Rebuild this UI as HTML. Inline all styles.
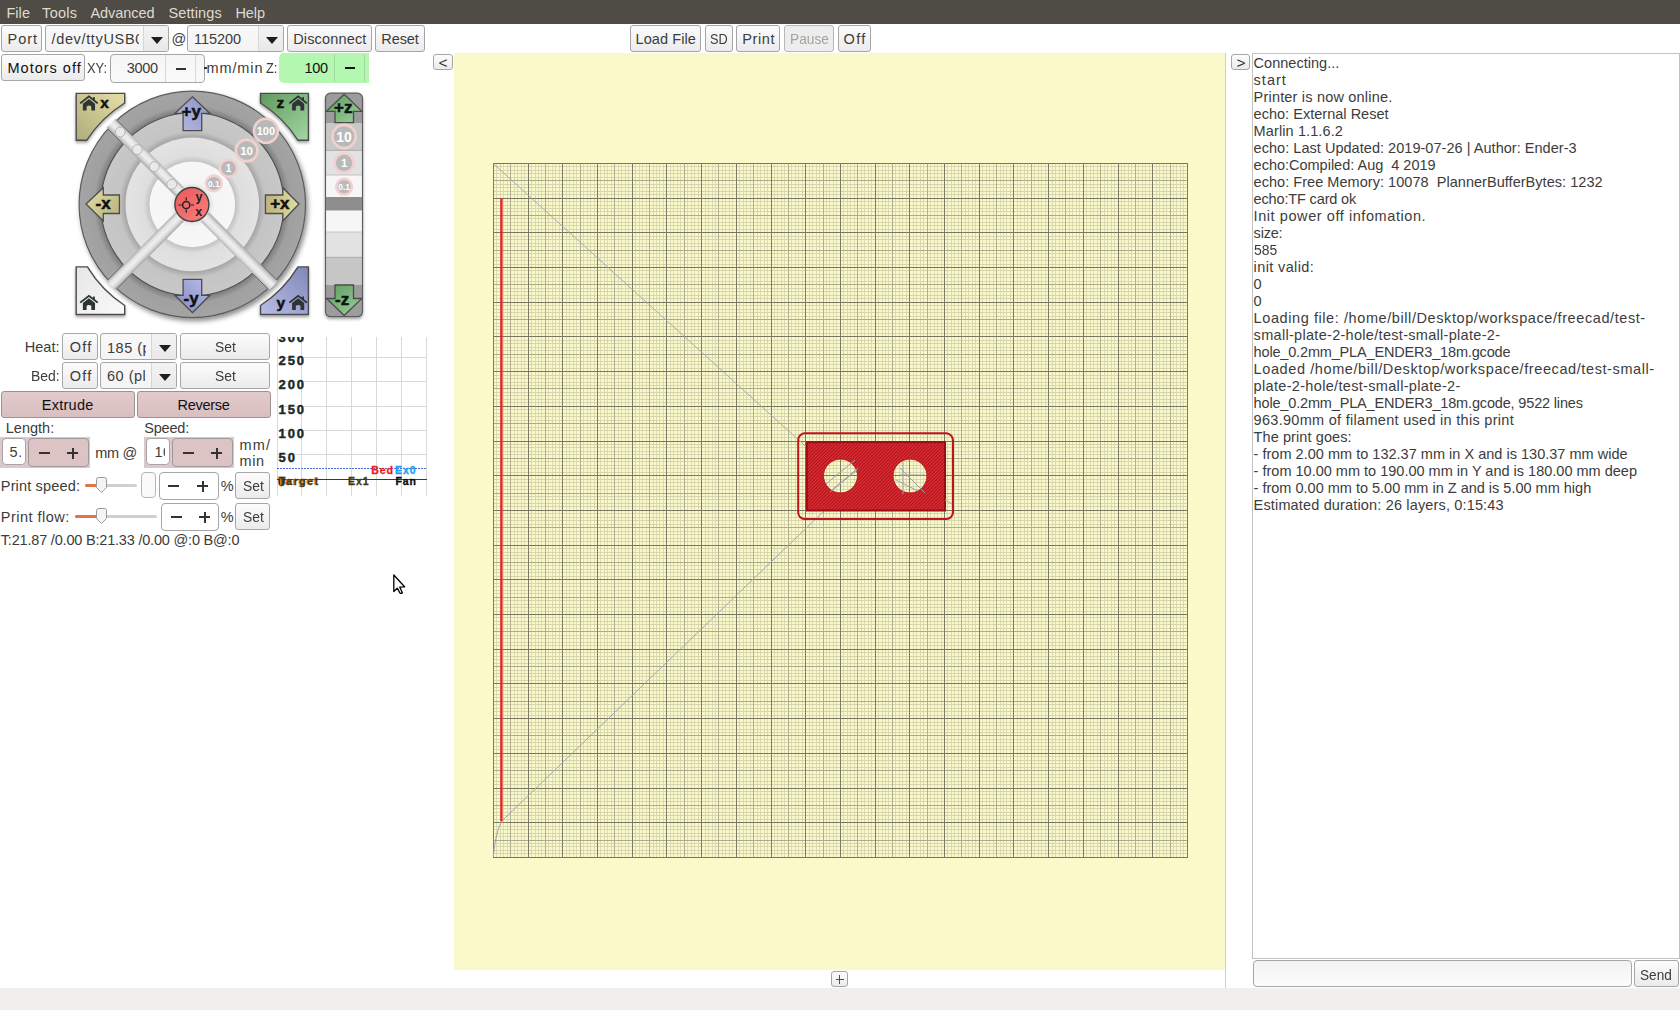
<!DOCTYPE html>
<html><head><meta charset="utf-8">
<style>
*{margin:0;padding:0;box-sizing:border-box}
html,body{width:1680px;height:1010px;overflow:hidden;background:#fff;font-family:"Liberation Sans",sans-serif;color:#3c3c3c;font-size:14.5px}
.a{position:absolute}
.t{position:absolute;white-space:pre}
.btn{position:absolute;border:1px solid #a6a6a6;border-radius:3px;background:linear-gradient(#fcfcfc,#ebebeb)}
.combo{position:absolute;border:1px solid #a6a6a6;border-radius:3px;background:linear-gradient(#f8f8f8,#f4f4f4);overflow:hidden;white-space:pre}
.sep{position:absolute;top:0;bottom:0;border-left:1px solid #d6d6d6;background:linear-gradient(#f3f3f3,#e9e9e9)}
.tri{position:absolute;width:0;height:0;border-left:6px solid transparent;border-right:6px solid transparent;border-top:7px solid #1e1e1e}
.spin{position:absolute;border:1px solid #a6a6a6;border-radius:4px;background:#fff}

</style></head><body>
<div class="a" style="left:0;top:0;width:1680px;height:24px;background:#4f4b45"></div>
<div class="a" style="left:0;top:988px;width:1680px;height:22px;background:#f0efed"></div>

<!-- row 1 -->
<div class="btn" style="left:1px;top:25px;width:41px;height:27px"></div>
<div class="combo" style="left:45px;top:25px;width:124px;height:27px"><div class="a" style="left:0;top:0;width:93px;height:25px;overflow:hidden"><div class="t" style="left:5.5px;top:5.9px;font-size:14.5px;line-height:14.5px;letter-spacing:0.65px">/dev/ttyUSB0</div></div><div class="sep" style="left:97px;width:27px"><div class="tri" style="left:7px;top:11px"></div></div></div>
<div class="combo" style="left:187px;top:25px;width:97px;height:27px"><div class="sep" style="left:70px;width:27px"><div class="tri" style="left:7px;top:11px"></div></div></div>
<div class="btn" style="left:287px;top:25px;width:85px;height:27px"></div>
<div class="btn" style="left:375px;top:25px;width:50px;height:27px"></div>
<div class="btn" style="left:630px;top:25px;width:71px;height:27px"></div>
<div class="btn" style="left:705px;top:25px;width:28px;height:27px"></div>
<div class="btn" style="left:736px;top:25px;width:44px;height:27px"></div>
<div class="btn" style="left:784px;top:25px;width:50px;height:27px;background:#ededed;border-color:#b8b8b8"></div>
<div class="btn" style="left:838px;top:25px;width:33px;height:27px"></div>

<!-- row 2 -->
<div class="btn" style="left:1px;top:54px;width:84px;height:27px"></div>
<div class="a" style="left:110px;top:54px;width:95px;height:29px;border:1px solid #a6a6a6;border-radius:4px;background:linear-gradient(#f5f5f5,#fafafa)">
  <div class="a" style="left:54px;top:0;width:1px;height:27px;background:#d8d8d8"></div>
  <div class="a" style="left:84px;top:0;width:1px;height:27px;background:#d8d8d8"></div>
  <div class="a" style="left:65px;top:13px;width:10px;height:2px;background:#333"></div>
</div>
<div class="a" style="left:204px;top:67px;width:3px;height:2px;background:#333"></div>
<div class="a" style="left:279px;top:53px;width:90px;height:30px;background:#b4f7b1;border-radius:5px 0 0 5px">
  <div class="a" style="left:55px;top:1px;width:1px;height:28px;background:#a0d8a0"></div>
  <div class="a" style="left:85px;top:1px;width:1px;height:28px;background:#a0d8a0"></div>
  <div class="a" style="left:66px;top:14px;width:10px;height:2px;background:#111"></div>
</div>
<div class="btn" style="left:433px;top:54px;width:20px;height:16px"></div>
<div class="t" style="left:438.5px;top:55px;font-size:15.5px;line-height:16px;color:#333">&lt;</div>

<!-- heat / bed -->
<div class="btn" style="left:62px;top:333px;width:36px;height:27px"></div>
<div class="combo" style="left:100px;top:333px;width:77px;height:27px"><div class="a" style="left:0;top:0;width:45px;height:25px;overflow:hidden"><div class="t" style="left:6px;top:6.5px;font-size:14.5px;line-height:14.5px;letter-spacing:0.5px">185 (pla)</div></div><div class="sep" style="left:50px;width:27px;background:linear-gradient(#f3f3f3,#e9e9e9)"><div class="tri" style="left:7px;top:11px"></div></div></div>
<div class="btn" style="left:180px;top:333px;width:90px;height:27px"></div>
<div class="btn" style="left:62px;top:362px;width:36px;height:27px"></div>
<div class="combo" style="left:100px;top:362px;width:77px;height:27px"><div class="a" style="left:0;top:0;width:44px;height:25px;overflow:hidden"><div class="t" style="left:6px;top:6.3px;font-size:14.5px;line-height:14.5px;letter-spacing:0.5px">60 (pla)</div></div><div class="sep" style="left:50px;width:27px"><div class="tri" style="left:7px;top:11px"></div></div></div>
<div class="btn" style="left:180px;top:362px;width:90px;height:27px"></div>
<div class="btn" style="left:1px;top:391px;width:134px;height:27px;background:linear-gradient(#e2c9ca,#d9bfc0);border-color:#9c9090"></div>
<div class="btn" style="left:137px;top:391px;width:134px;height:27px;background:linear-gradient(#e2c9ca,#d9bfc0);border-color:#9c9090"></div>

<!-- length / speed -->
<div class="a" style="left:0;top:437px;width:90px;height:31px;background:#dfc8c9"></div>
<div class="a" style="left:2px;top:438px;width:24px;height:27px;border:1px solid #a6a6a6;border-radius:4px;background:#fff;overflow:hidden"><div class="a" style="left:5px;top:0;width:13px;height:25px;overflow:hidden"><div class="t" style="left:1.5px;top:6.2px;font-size:14.5px;line-height:14.5px;letter-spacing:0.8px">5.0</div></div></div>
<div class="a" style="left:28px;top:438px;width:61px;height:29px;border:1px solid #a09a9a;border-radius:4px;background:#dcc4c5">
  <div class="a" style="left:10px;top:13px;width:11px;height:2px;background:#333"></div>
  <div class="a" style="left:38px;top:13px;width:11px;height:2px;background:#333"></div>
  <div class="a" style="left:42.5px;top:8.5px;width:2px;height:11px;background:#333"></div>
</div>
<div class="a" style="left:144px;top:437px;width:90px;height:31px;background:#dfc8c9"></div>
<div class="a" style="left:146px;top:438px;width:24px;height:27px;border:1px solid #a6a6a6;border-radius:4px;background:#fff;overflow:hidden"><div class="a" style="left:5px;top:0;width:13px;height:25px;overflow:hidden"><div class="t" style="left:2.5px;top:6.2px;font-size:14.5px;line-height:14.5px;letter-spacing:0.5px">100</div></div></div>
<div class="a" style="left:172px;top:438px;width:61px;height:29px;border:1px solid #a09a9a;border-radius:4px;background:#dcc4c5">
  <div class="a" style="left:10px;top:13px;width:11px;height:2px;background:#333"></div>
  <div class="a" style="left:38px;top:13px;width:11px;height:2px;background:#333"></div>
  <div class="a" style="left:42.5px;top:8.5px;width:2px;height:11px;background:#333"></div>
</div>

<!-- print speed -->
<div class="a" style="left:85px;top:484px;width:52px;height:3px;border-radius:2px;background:#d0d0d0"></div>
<div class="a" style="left:85px;top:484px;width:14px;height:3px;border-radius:2px;background:#e0734a"></div>
<svg class="a" style="left:95px;top:477px" width="13" height="17"><path d="M1.5 2.5 Q1.5 0.5 3.5 0.5 L9.5 0.5 Q11.5 0.5 11.5 2.5 L11.5 10.5 L6.5 15.5 L1.5 10.5 Z" fill="#f4f4f4" stroke="#9a9a9a"/></svg>
<div class="a" style="left:141px;top:472px;width:15px;height:26px;border:1px solid #b6b6b6;border-radius:4px;background:#fafafa"></div>
<div class="a" style="left:159px;top:472px;width:60px;height:28px;border:1px solid #a6a6a6;border-radius:4px;background:#fff">
  <div class="a" style="left:8px;top:12px;width:11px;height:2px;background:#333"></div>
  <div class="a" style="left:37px;top:12px;width:11px;height:2px;background:#333"></div>
  <div class="a" style="left:41.5px;top:7.5px;width:2px;height:11px;background:#333"></div>
</div>
<div class="btn" style="left:235px;top:472px;width:35px;height:27px"></div>

<!-- print flow -->
<div class="a" style="left:75px;top:515px;width:82px;height:3px;border-radius:2px;background:#d0d0d0"></div>
<div class="a" style="left:75px;top:515px;width:22px;height:3px;border-radius:2px;background:#e0734a"></div>
<svg class="a" style="left:95px;top:508px" width="13" height="17"><path d="M1.5 2.5 Q1.5 0.5 3.5 0.5 L9.5 0.5 Q11.5 0.5 11.5 2.5 L11.5 10.5 L6.5 15.5 L1.5 10.5 Z" fill="#f4f4f4" stroke="#9a9a9a"/></svg>
<div class="a" style="left:161px;top:503px;width:58px;height:28px;border:1px solid #a6a6a6;border-radius:4px;background:#fff">
  <div class="a" style="left:9px;top:12px;width:11px;height:2px;background:#333"></div>
  <div class="a" style="left:37px;top:12px;width:11px;height:2px;background:#333"></div>
  <div class="a" style="left:41.5px;top:7.5px;width:2px;height:11px;background:#333"></div>
</div>
<div class="btn" style="left:235px;top:503px;width:35px;height:27px"></div>

<!-- log panel -->
<div class="a" style="left:1225px;top:53px;width:1px;height:935px;background:#cfcfcf"></div>
<div class="btn" style="left:1231px;top:54px;width:19px;height:16px"></div>
<div class="t" style="left:1236.5px;top:55px;font-size:15.5px;line-height:16px;color:#333">&gt;</div>
<div class="a" style="left:1252px;top:53px;width:428px;height:906px;border:1px solid #c2c2c2;background:#fff"></div>
<div class="a" style="left:1253px;top:960px;width:379px;height:27px;border:1px solid #a6a6a6;border-radius:4px;background:linear-gradient(#f2f2f2,#fcfcfc)"></div>
<div class="btn" style="left:1634px;top:960px;width:45px;height:27px"></div>

<svg class="a" style="left:60px;top:80px" width="320" height="250" viewBox="60 80 320 250">
<defs>
<filter id="sh" x="-20%" y="-20%" width="140%" height="140%"><feGaussianBlur in="SourceAlpha" stdDeviation="2.5"/><feOffset dx="1.5" dy="3" result="b"/><feComponentTransfer><feFuncA type="linear" slope="0.45"/></feComponentTransfer><feMerge><feMergeNode/><feMergeNode in="SourceGraphic"/></feMerge></filter>
<filter id="sh2" x="-20%" y="-20%" width="140%" height="140%"><feGaussianBlur in="SourceAlpha" stdDeviation="1.8"/><feOffset dx="0" dy="2" result="b"/><feComponentTransfer><feFuncA type="linear" slope="0.35"/></feComponentTransfer><feMerge><feMergeNode/><feMergeNode in="SourceGraphic"/></feMerge></filter>
<linearGradient id="gY" x1="1" y1="0" x2="0" y2="1"><stop offset="0" stop-color="#e4e0a4"/><stop offset="1" stop-color="#b0ab7c"/></linearGradient>
<linearGradient id="gYx" x1="0" y1="0" x2="1" y2="0"><stop offset="0" stop-color="#b8b380"/><stop offset="1" stop-color="#e2dea2"/></linearGradient>
<linearGradient id="gYx2" x1="0" y1="0" x2="1" y2="1"><stop offset="0" stop-color="#e4e0a4"/><stop offset="1" stop-color="#b4af7c"/></linearGradient>
<linearGradient id="gG" x1="0" y1="0" x2="1" y2="1"><stop offset="0" stop-color="#5e9a5e"/><stop offset="1" stop-color="#a4d6a2"/></linearGradient>
<linearGradient id="gGz" x1="0" y1="0" x2="1" y2="1"><stop offset="0" stop-color="#5d9c5f"/><stop offset="1" stop-color="#9dd09d"/></linearGradient>
<linearGradient id="gB" x1="1" y1="0" x2="0" y2="1"><stop offset="0" stop-color="#8088b8"/><stop offset="1" stop-color="#b8bee8"/></linearGradient>
<linearGradient id="gBy" x1="0" y1="1" x2="1" y2="0"><stop offset="0" stop-color="#b4bae6"/><stop offset="1" stop-color="#8c93c4"/></linearGradient>
<linearGradient id="gW" x1="0" y1="0" x2="1" y2="1"><stop offset="0" stop-color="#e6e6e6"/><stop offset="1" stop-color="#fafafa"/></linearGradient>
<linearGradient id="gR" x1="0" y1="0" x2="1" y2="1"><stop offset="0" stop-color="#ec5858"/><stop offset="1" stop-color="#f88080"/></linearGradient>
<linearGradient id="bar" x1="0" y1="0" x2="0" y2="1"><stop offset="0" stop-color="#a9a9a9"/><stop offset="0.28" stop-color="#dcdcdc"/><stop offset="0.5" stop-color="#efefef"/><stop offset="0.75" stop-color="#e4e4e4"/><stop offset="1" stop-color="#b2b2b2"/></linearGradient>
<radialGradient id="ring1" cx="0.5" cy="0.5" r="0.5"><stop offset="0.809" stop-color="#7c7c7c"/><stop offset="0.87" stop-color="#a0a0a0"/><stop offset="1" stop-color="#a4a4a4"/></radialGradient>
<radialGradient id="ring2" cx="0.5" cy="0.5" r="0.5"><stop offset="0.729" stop-color="#a4a4a4"/><stop offset="0.8" stop-color="#c4c4c4"/><stop offset="1" stop-color="#c8c8c8"/></radialGradient>
<radialGradient id="ring3" cx="0.5" cy="0.5" r="0.5"><stop offset="0.641" stop-color="#c2c2c2"/><stop offset="0.73" stop-color="#dedede"/><stop offset="1" stop-color="#e3e3e3"/></radialGradient>
<radialGradient id="ring4" cx="0.5" cy="0.5" r="0.5"><stop offset="0.4" stop-color="#e2e2e2"/><stop offset="0.52" stop-color="#f5f5f5"/><stop offset="1" stop-color="#f7f7f7"/></radialGradient>
<linearGradient id="gBy2" x1="1" y1="0" x2="0" y2="1"><stop offset="0" stop-color="#b8bee9"/><stop offset="1" stop-color="#8088c0"/></linearGradient>
</defs>
<g filter="url(#sh)">
<circle cx="192.3" cy="204.4" r="113.2" fill="url(#ring1)" stroke="#5c5c5c" stroke-width="1.2"/>
</g>
<circle cx="192.3" cy="204.4" r="91.6" fill="url(#ring2)" stroke="#505050" stroke-width="1.1"/>
<circle cx="192.3" cy="204.4" r="66.8" fill="url(#ring3)"/>
<circle cx="192.3" cy="204.4" r="42.8" fill="url(#ring4)"/>
<g transform="translate(192.3 204.4) rotate(45)"><rect x="17.4" y="-6.2" width="97.60000000000001" height="12.4" fill="url(#bar)"/></g>
<g transform="translate(192.3 204.4) rotate(135)"><rect x="17.4" y="-6.2" width="97.60000000000001" height="12.4" fill="url(#bar)"/></g>
<g transform="translate(192.3 204.4) rotate(225)"><rect x="17.4" y="-6.2" width="97.60000000000001" height="12.4" fill="url(#bar)"/></g>
<line x1="261.4" y1="264.6" x2="276.7" y2="279.9" stroke="#6a6a6a" stroke-width="1"/>
<line x1="252.5" y1="273.5" x2="267.8" y2="288.8" stroke="#6a6a6a" stroke-width="1"/>
<line x1="132.1" y1="273.5" x2="116.8" y2="288.8" stroke="#6a6a6a" stroke-width="1"/>
<line x1="123.2" y1="264.6" x2="107.9" y2="279.9" stroke="#6a6a6a" stroke-width="1"/>
<line x1="123.2" y1="144.2" x2="107.9" y2="128.9" stroke="#6a6a6a" stroke-width="1"/>
<line x1="132.1" y1="135.3" x2="116.8" y2="120.0" stroke="#6a6a6a" stroke-width="1"/>
<circle cx="120.2" cy="132.0" r="4.9" fill="#e9e9e9" stroke="#b4b4b4" stroke-width="1"/>
<circle cx="137.3" cy="149.6" r="4.9" fill="#e9e9e9" stroke="#b4b4b4" stroke-width="1"/>
<circle cx="154.3" cy="166.6" r="4.9" fill="#e9e9e9" stroke="#b4b4b4" stroke-width="1"/>
<circle cx="171.8" cy="184.3" r="4.9" fill="#e9e9e9" stroke="#b4b4b4" stroke-width="1"/>
<path d="M76.2 93.4 H124.7 V103 A122 122 0 0 0 86.7 140.3 H76.2 Z" fill="url(#gY)" stroke="#4c4c4c" stroke-width="1.4" filter="url(#sh2)"/>
<path d="M260.5 93.4 H308.4 V140.3 H298 A122 122 0 0 0 260.5 103 Z" fill="url(#gG)" stroke="#4c4c4c" stroke-width="1.4" filter="url(#sh2)"/>
<path d="M76.2 266.9 H87.4 A122 122 0 0 0 124.7 305.5 V314.5 H76.2 Z" fill="url(#gW)" stroke="#4c4c4c" stroke-width="1.4" filter="url(#sh2)"/>
<path d="M308.4 266.9 V314.5 H260.5 V305.5 A122 122 0 0 0 298 266.9 Z" fill="url(#gB)" stroke="#4c4c4c" stroke-width="1.4" filter="url(#sh2)"/>
<path d="M192.4 96.8 L209.8 113.4 H201.70000000000002 V130.7 H183.1 V113.4 H175.0 Z" fill="url(#gBy)" stroke="#4c4c4c" stroke-width="1.3"/>
<path d="M192.4 312.7 L209.8 295.3 H201.70000000000002 V279.3 H183.1 V295.3 H175.0 Z" fill="url(#gBy2)" stroke="#4c4c4c" stroke-width="1.3"/>
<path d="M86 204 L103.3 187.7 V195 H119.4 V213.5 H103.3 V221 Z" fill="url(#gYx2)" stroke="#4c4c4c" stroke-width="1.3"/>
<path d="M298.9 204 L282.8 187.7 V195 H265.4 V213.5 H282.8 V221 Z" fill="url(#gYx)" stroke="#4c4c4c" stroke-width="1.3"/>
<circle cx="191.9" cy="204.5" r="17" fill="url(#gR)" stroke="#404040" stroke-width="1.4"/>
<circle cx="186.2" cy="205" r="3.6" fill="none" stroke="#222" stroke-width="1.5"/>
<path d="M186.2 197.2 V200.6 M186.2 209.4 V212.8 M178.4 205 H181.8 M190.6 205 H194" stroke="#222" stroke-width="1.2"/>
<text x="195.5" y="200.5" font-family="Liberation Sans" font-weight="700" font-size="12.5" fill="#222">y</text>
<text x="195.3" y="215.5" font-family="Liberation Sans" font-weight="700" font-size="12.5" fill="#222">x</text>
<circle cx="213.8" cy="183.4" r="7.8" fill="#b9b9b9" stroke="#f2d0d0" stroke-width="2.6"/><text x="213.8" y="186.5" text-anchor="middle" font-family="Liberation Sans" font-weight="700" font-size="8.5" fill="#fff">0.1</text>
<circle cx="228.5" cy="168.3" r="8.6" fill="#b9b9b9" stroke="#f2d0d0" stroke-width="2.6"/><text x="228.5" y="171.9" text-anchor="middle" font-family="Liberation Sans" font-weight="700" font-size="10" fill="#fff">1</text>
<circle cx="246.6" cy="150.6" r="10.8" fill="#b9b9b9" stroke="#f2d0d0" stroke-width="2.6"/><text x="246.6" y="154.7" text-anchor="middle" font-family="Liberation Sans" font-weight="700" font-size="11.5" fill="#fff">10</text>
<circle cx="265.9" cy="130.8" r="12.0" fill="#b9b9b9" stroke="#f2d0d0" stroke-width="2.6"/><text x="265.9" y="134.8" text-anchor="middle" font-family="Liberation Sans" font-weight="700" font-size="11" fill="#fff">100</text>
<g filter="url(#sh2)"><rect x="325.5" y="93.2" width="37" height="223.5" rx="5" fill="#9c9c9c" stroke="#5c5c5c" stroke-width="1.2"/></g>
<rect x="326.1" y="123" width="35.8" height="27.4" fill="#c8c8c8"/>
<rect x="326.1" y="150.4" width="35.8" height="24.6" fill="#e2e2e2"/>
<rect x="326.1" y="175" width="35.8" height="22.0" fill="#f6f6f6"/>
<rect x="326.1" y="197" width="35.8" height="13.5" fill="#8e8e8e"/>
<rect x="326.1" y="210.5" width="35.8" height="21.5" fill="#f6f6f6"/>
<rect x="326.1" y="232" width="35.8" height="25.3" fill="#e2e2e2"/>
<rect x="326.1" y="257.3" width="35.8" height="27.7" fill="#c6c6c6"/>
<line x1="326" y1="150.4" x2="362" y2="150.4" stroke="#aaa" stroke-width="0.8"/>
<line x1="326" y1="175" x2="362" y2="175" stroke="#bbb" stroke-width="0.8"/>
<line x1="326" y1="232" x2="362" y2="232" stroke="#bbb" stroke-width="0.8"/>
<line x1="326" y1="257.3" x2="362" y2="257.3" stroke="#aaa" stroke-width="0.8"/>
<path d="M344.2 94.2 L361.8 111.4 H353.5 V122.6 H335 V111.4 H326.4 Z" fill="url(#gGz)" stroke="#4c4c4c" stroke-width="1.3"/>
<path d="M344.2 315.5 L361.8 298.5 H353.5 V285 H335 V298.5 H326.4 Z" fill="url(#gGz)" stroke="#4c4c4c" stroke-width="1.3"/>
<circle cx="344.1" cy="136.5" r="11.6" fill="#b9b9b9" stroke="#f2d0d0" stroke-width="2.6"/><text x="344.1" y="141.5" text-anchor="middle" font-family="Liberation Sans" font-weight="700" font-size="14" fill="#fff">10</text>
<circle cx="344.1" cy="162.9" r="9.4" fill="#b9b9b9" stroke="#f2d0d0" stroke-width="2.6"/><text x="344.1" y="167.0" text-anchor="middle" font-family="Liberation Sans" font-weight="700" font-size="11.5" fill="#fff">1</text>
<circle cx="344.1" cy="186.7" r="7.8" fill="#b9b9b9" stroke="#f2d0d0" stroke-width="2.6"/><text x="344.1" y="189.8" text-anchor="middle" font-family="Liberation Sans" font-weight="700" font-size="8.5" fill="#fff">0.1</text>
<text x="181.5" y="117.3" font-family="Liberation Sans" font-weight="700" font-size="17" fill="#111" stroke="#111" stroke-width="0.5">+y</text>
<text x="183.5" y="303.6" font-family="Liberation Sans" font-weight="700" font-size="17" fill="#111" stroke="#111" stroke-width="0.5">-y</text>
<text x="95.6" y="209.2" font-family="Liberation Sans" font-weight="700" font-size="17" fill="#111" stroke="#111" stroke-width="0.5">-x</text>
<text x="270.2" y="209.2" font-family="Liberation Sans" font-weight="700" font-size="17" fill="#111" stroke="#111" stroke-width="0.5">+x</text>
<text x="334.0" y="113.3" font-family="Liberation Sans" font-weight="700" font-size="17" fill="#111" stroke="#111" stroke-width="0.5">+z</text>
<text x="335.0" y="305.2" font-family="Liberation Sans" font-weight="700" font-size="17" fill="#111" stroke="#111" stroke-width="0.5">-z</text>
<g transform="translate(79.6 95.6) scale(1.17 1.03)"><path d="M0.5 7.5 L8 0.8 L15.5 7.5" fill="none" stroke="#2e3336" stroke-width="1.6"/><path d="M12.2 1.5 V5" stroke="#2e3336" stroke-width="1.6"/><path d="M2.8 7.8 L8 3.2 L13.2 7.8 V14.5 H10 V10.5 Q8 8.8 6 10.5 V14.5 H2.8 Z" fill="#2e3336"/></g>
<text x="100.3" y="107.6" font-family="Liberation Sans" font-weight="700" font-size="15.5" fill="#111" stroke="#111" stroke-width="0.5">x</text>
<text x="276.6" y="107.6" font-family="Liberation Sans" font-weight="700" font-size="15.5" fill="#111" stroke="#111" stroke-width="0.5">z</text>
<g transform="translate(288.8 95.6) scale(1.17 1.03)"><path d="M0.5 7.5 L8 0.8 L15.5 7.5" fill="none" stroke="#2e3336" stroke-width="1.6"/><path d="M12.2 1.5 V5" stroke="#2e3336" stroke-width="1.6"/><path d="M2.8 7.8 L8 3.2 L13.2 7.8 V14.5 H10 V10.5 Q8 8.8 6 10.5 V14.5 H2.8 Z" fill="#2e3336"/></g>
<g transform="translate(79.6 295.0) scale(1.17 1.03)"><path d="M0.5 7.5 L8 0.8 L15.5 7.5" fill="none" stroke="#2e3336" stroke-width="1.6"/><path d="M12.2 1.5 V5" stroke="#2e3336" stroke-width="1.6"/><path d="M2.8 7.8 L8 3.2 L13.2 7.8 V14.5 H10 V10.5 Q8 8.8 6 10.5 V14.5 H2.8 Z" fill="#2e3336"/></g>
<text x="276.4" y="307.5" font-family="Liberation Sans" font-weight="700" font-size="15.5" fill="#111" stroke="#111" stroke-width="0.5">y</text>
<g transform="translate(288.8 295.0) scale(1.17 1.03)"><path d="M0.5 7.5 L8 0.8 L15.5 7.5" fill="none" stroke="#2e3336" stroke-width="1.6"/><path d="M12.2 1.5 V5" stroke="#2e3336" stroke-width="1.6"/><path d="M2.8 7.8 L8 3.2 L13.2 7.8 V14.5 H10 V10.5 Q8 8.8 6 10.5 V14.5 H2.8 Z" fill="#2e3336"/></g>
</svg>
<svg class="a" style="left:272px;top:334px" width="160" height="165" viewBox="272 334 160 165">
<line x1="277.5" y1="337" x2="277.5" y2="496" stroke="#d9d9d9" stroke-width="1"/>
<line x1="301.5" y1="337" x2="301.5" y2="496" stroke="#d9d9d9" stroke-width="1"/>
<line x1="326.5" y1="337" x2="326.5" y2="496" stroke="#d9d9d9" stroke-width="1"/>
<line x1="351.5" y1="337" x2="351.5" y2="496" stroke="#d9d9d9" stroke-width="1"/>
<line x1="376.5" y1="337" x2="376.5" y2="496" stroke="#d9d9d9" stroke-width="1"/>
<line x1="401.5" y1="337" x2="401.5" y2="496" stroke="#d9d9d9" stroke-width="1"/>
<line x1="426.5" y1="337" x2="426.5" y2="496" stroke="#d9d9d9" stroke-width="1"/>
<line x1="277" y1="357.5" x2="427" y2="357.5" stroke="#d9d9d9" stroke-width="1"/>
<line x1="277" y1="381.5" x2="427" y2="381.5" stroke="#d9d9d9" stroke-width="1"/>
<line x1="277" y1="406.5" x2="427" y2="406.5" stroke="#d9d9d9" stroke-width="1"/>
<line x1="277" y1="430.5" x2="427" y2="430.5" stroke="#d9d9d9" stroke-width="1"/>
<line x1="277" y1="454.5" x2="427" y2="454.5" stroke="#d9d9d9" stroke-width="1"/>
<line x1="277" y1="479.5" x2="427" y2="479.5" stroke="#3a3a30" stroke-width="1.2"/>
<line x1="277" y1="468.5" x2="427" y2="468.5" stroke="#4a6ad8" stroke-width="1" stroke-dasharray="2 1"/>
<clipPath id="gclip"><rect x="272" y="337" width="160" height="165"/></clipPath>
<g clip-path="url(#gclip)">
<text x="278.5" y="341.5" font-family="Liberation Sans" font-weight="700" font-size="13" fill="#1a2a2a" stroke="#1a2a2a" stroke-width="0.45" letter-spacing="1.9">300</text>
</g>
<text x="278.5" y="365.2" font-family="Liberation Sans" font-weight="700" font-size="13" fill="#1a2a2a" stroke="#1a2a2a" stroke-width="0.45" letter-spacing="1.9">250</text>
<text x="278.5" y="389.2" font-family="Liberation Sans" font-weight="700" font-size="13" fill="#1a2a2a" stroke="#1a2a2a" stroke-width="0.45" letter-spacing="1.9">200</text>
<text x="278.5" y="413.9" font-family="Liberation Sans" font-weight="700" font-size="13" fill="#1a2a2a" stroke="#1a2a2a" stroke-width="0.45" letter-spacing="1.9">150</text>
<text x="278.5" y="438.0" font-family="Liberation Sans" font-weight="700" font-size="13" fill="#1a2a2a" stroke="#1a2a2a" stroke-width="0.45" letter-spacing="1.9">100</text>
<text x="278.5" y="461.9" font-family="Liberation Sans" font-weight="700" font-size="13" fill="#1a2a2a" stroke="#1a2a2a" stroke-width="0.45" letter-spacing="1.9">50</text>
<text x="278.0" y="485.5" font-family="Liberation Sans" font-weight="700" font-size="13" fill="#1a2a2a" stroke="#1a2a2a" stroke-width="0.45" letter-spacing="1.9">0</text>
<text x="371.2" y="473.8" font-family="Liberation Sans" font-weight="700" font-size="10.5" fill="#f01818" stroke="#f01818" stroke-width="0.3" letter-spacing="0.9">Bed</text>
<text x="395.0" y="473.8" font-family="Liberation Sans" font-weight="700" font-size="10.5" fill="#1a9cf2" stroke="#1a9cf2" stroke-width="0.3" letter-spacing="0.9">Ex0</text>
<text x="277.8" y="485.3" font-family="Liberation Sans" font-weight="700" font-size="10.5" fill="#f08020" stroke="#f08020" stroke-width="0.3" letter-spacing="1.6">Target</text>
<text x="279.0" y="485.3" font-family="Liberation Sans" font-weight="700" font-size="10.5" fill="#3a3a18" stroke="#3a3a18" stroke-width="0.3" letter-spacing="1.6">Target</text>
<text x="348.0" y="485.3" font-family="Liberation Sans" font-weight="700" font-size="10.5" fill="#3a3a10" stroke="#3a3a10" stroke-width="0.3" letter-spacing="0.9">Ex1</text>
<text x="395.5" y="485.3" font-family="Liberation Sans" font-weight="700" font-size="10.5" fill="#0a0a0a" stroke="#0a0a0a" stroke-width="0.3" letter-spacing="0.9">Fan</text>
</svg>
<svg class="a" style="left:388px;top:570px" width="24" height="28" viewBox="388 570 24 28"><path d="M393.8 575 V591.5 L397.3 588.2 L399.9 592.9 Q401.1 593.9 402.4 592.7 L399.8 587.2 L404.6 586.8 Z" fill="#fbfbfb" stroke="#000" stroke-width="1.3" stroke-linejoin="round"/></svg>
<div class="a" style="left:454px;top:53px;width:771px;height:917px;background:#faf9c9"></div>
<svg class="a" style="left:454px;top:53px" width="771" height="917" viewBox="454 53 771 917">
<path d="M496.5 163V858M500.5 163V858M503.5 163V858M507.5 163V858M514.5 163V858M517.5 163V858M521.5 163V858M524.5 163V858M531.5 163V858M535.5 163V858M538.5 163V858M541.5 163V858M548.5 163V858M552.5 163V858M555.5 163V858M559.5 163V858M566.5 163V858M569.5 163V858M573.5 163V858M576.5 163V858M583.5 163V858M587.5 163V858M590.5 163V858M594.5 163V858M600.5 163V858M604.5 163V858M607.5 163V858M611.5 163V858M618.5 163V858M621.5 163V858M625.5 163V858M628.5 163V858M635.5 163V858M639.5 163V858M642.5 163V858M646.5 163V858M653.5 163V858M656.5 163V858M659.5 163V858M663.5 163V858M670.5 163V858M673.5 163V858M677.5 163V858M680.5 163V858M687.5 163V858M691.5 163V858M694.5 163V858M698.5 163V858M705.5 163V858M708.5 163V858M712.5 163V858M715.5 163V858M722.5 163V858M725.5 163V858M729.5 163V858M732.5 163V858M739.5 163V858M743.5 163V858M746.5 163V858M750.5 163V858M757.5 163V858M760.5 163V858M764.5 163V858M767.5 163V858M774.5 163V858M777.5 163V858M781.5 163V858M784.5 163V858M791.5 163V858M795.5 163V858M798.5 163V858M802.5 163V858M809.5 163V858M812.5 163V858M816.5 163V858M819.5 163V858M826.5 163V858M829.5 163V858M833.5 163V858M836.5 163V858M843.5 163V858M847.5 163V858M850.5 163V858M854.5 163V858M861.5 163V858M864.5 163V858M868.5 163V858M871.5 163V858M878.5 163V858M882.5 163V858M885.5 163V858M888.5 163V858M895.5 163V858M899.5 163V858M902.5 163V858M906.5 163V858M913.5 163V858M916.5 163V858M920.5 163V858M923.5 163V858M930.5 163V858M934.5 163V858M937.5 163V858M941.5 163V858M947.5 163V858M951.5 163V858M954.5 163V858M958.5 163V858M965.5 163V858M968.5 163V858M972.5 163V858M975.5 163V858M982.5 163V858M986.5 163V858M989.5 163V858M993.5 163V858M1000.5 163V858M1003.5 163V858M1006.5 163V858M1010.5 163V858M1017.5 163V858M1020.5 163V858M1024.5 163V858M1027.5 163V858M1034.5 163V858M1038.5 163V858M1041.5 163V858M1045.5 163V858M1052.5 163V858M1055.5 163V858M1059.5 163V858M1062.5 163V858M1069.5 163V858M1072.5 163V858M1076.5 163V858M1079.5 163V858M1086.5 163V858M1090.5 163V858M1093.5 163V858M1097.5 163V858M1104.5 163V858M1107.5 163V858M1111.5 163V858M1114.5 163V858M1121.5 163V858M1124.5 163V858M1128.5 163V858M1131.5 163V858M1138.5 163V858M1142.5 163V858M1145.5 163V858M1149.5 163V858M1156.5 163V858M1159.5 163V858M1163.5 163V858M1166.5 163V858M1173.5 163V858M1176.5 163V858M1180.5 163V858M1183.5 163V858" stroke="#dcdab3" stroke-width="1" fill="none"/>
<path d="M493 166.5H1188M493 170.5H1188M493 173.5H1188M493 177.5H1188M493 184.5H1188M493 187.5H1188M493 191.5H1188M493 194.5H1188M493 201.5H1188M493 205.5H1188M493 208.5H1188M493 211.5H1188M493 218.5H1188M493 222.5H1188M493 225.5H1188M493 229.5H1188M493 236.5H1188M493 239.5H1188M493 243.5H1188M493 246.5H1188M493 253.5H1188M493 257.5H1188M493 260.5H1188M493 264.5H1188M493 270.5H1188M493 274.5H1188M493 277.5H1188M493 281.5H1188M493 288.5H1188M493 291.5H1188M493 295.5H1188M493 298.5H1188M493 305.5H1188M493 309.5H1188M493 312.5H1188M493 316.5H1188M493 323.5H1188M493 326.5H1188M493 329.5H1188M493 333.5H1188M493 340.5H1188M493 343.5H1188M493 347.5H1188M493 350.5H1188M493 357.5H1188M493 361.5H1188M493 364.5H1188M493 368.5H1188M493 375.5H1188M493 378.5H1188M493 382.5H1188M493 385.5H1188M493 392.5H1188M493 395.5H1188M493 399.5H1188M493 402.5H1188M493 409.5H1188M493 413.5H1188M493 416.5H1188M493 420.5H1188M493 427.5H1188M493 430.5H1188M493 434.5H1188M493 437.5H1188M493 444.5H1188M493 447.5H1188M493 451.5H1188M493 454.5H1188M493 461.5H1188M493 465.5H1188M493 468.5H1188M493 472.5H1188M493 479.5H1188M493 482.5H1188M493 486.5H1188M493 489.5H1188M493 496.5H1188M493 499.5H1188M493 503.5H1188M493 506.5H1188M493 513.5H1188M493 517.5H1188M493 520.5H1188M493 524.5H1188M493 531.5H1188M493 534.5H1188M493 538.5H1188M493 541.5H1188M493 548.5H1188M493 552.5H1188M493 555.5H1188M493 558.5H1188M493 565.5H1188M493 569.5H1188M493 572.5H1188M493 576.5H1188M493 583.5H1188M493 586.5H1188M493 590.5H1188M493 593.5H1188M493 600.5H1188M493 604.5H1188M493 607.5H1188M493 611.5H1188M493 617.5H1188M493 621.5H1188M493 624.5H1188M493 628.5H1188M493 635.5H1188M493 638.5H1188M493 642.5H1188M493 645.5H1188M493 652.5H1188M493 656.5H1188M493 659.5H1188M493 663.5H1188M493 670.5H1188M493 673.5H1188M493 676.5H1188M493 680.5H1188M493 687.5H1188M493 690.5H1188M493 694.5H1188M493 697.5H1188M493 704.5H1188M493 708.5H1188M493 711.5H1188M493 715.5H1188M493 722.5H1188M493 725.5H1188M493 729.5H1188M493 732.5H1188M493 739.5H1188M493 742.5H1188M493 746.5H1188M493 749.5H1188M493 756.5H1188M493 760.5H1188M493 763.5H1188M493 767.5H1188M493 774.5H1188M493 777.5H1188M493 781.5H1188M493 784.5H1188M493 791.5H1188M493 794.5H1188M493 798.5H1188M493 801.5H1188M493 808.5H1188M493 812.5H1188M493 815.5H1188M493 819.5H1188M493 826.5H1188M493 829.5H1188M493 833.5H1188M493 836.5H1188M493 843.5H1188M493 846.5H1188M493 850.5H1188M493 853.5H1188" stroke="#d7d5ad" stroke-width="1" fill="none"/>
<path d="M510.5 163V858M545.5 163V858M580.5 163V858M614.5 163V858M649.5 163V858M684.5 163V858M718.5 163V858M753.5 163V858M788.5 163V858M823.5 163V858M857.5 163V858M892.5 163V858M927.5 163V858M961.5 163V858M996.5 163V858M1031.5 163V858M1065.5 163V858M1100.5 163V858M1135.5 163V858M1170.5 163V858" stroke="#afae91" stroke-width="1" fill="none"/>
<path d="M493 180.5H1188M493 215.5H1188M493 250.5H1188M493 284.5H1188M493 319.5H1188M493 354.5H1188M493 388.5H1188M493 423.5H1188M493 458.5H1188M493 493.5H1188M493 527.5H1188M493 562.5H1188M493 597.5H1188M493 631.5H1188M493 666.5H1188M493 701.5H1188M493 735.5H1188M493 770.5H1188M493 805.5H1188M493 840.5H1188" stroke="#abaa8d" stroke-width="1" fill="none"/>
<path d="M493.5 163V858M528.5 163V858M562.5 163V858M597.5 163V858M632.5 163V858M666.5 163V858M701.5 163V858M736.5 163V858M771.5 163V858M805.5 163V858M840.5 163V858M875.5 163V858M909.5 163V858M944.5 163V858M979.5 163V858M1013.5 163V858M1048.5 163V858M1083.5 163V858M1118.5 163V858M1152.5 163V858M1187.5 163V858" stroke="#7b7b66" stroke-width="1" fill="none"/>
<path d="M493 163.5H1188M493 198.5H1188M493 232.5H1188M493 267.5H1188M493 302.5H1188M493 336.5H1188M493 371.5H1188M493 406.5H1188M493 441.5H1188M493 475.5H1188M493 510.5H1188M493 545.5H1188M493 579.5H1188M493 614.5H1188M493 649.5H1188M493 683.5H1188M493 718.5H1188M493 753.5H1188M493 788.5H1188M493 822.5H1188M493 857.5H1188" stroke="#777762" stroke-width="1" fill="none"/>
<path d="M493 163.3 L808 448.5" stroke="#a6a6b0" stroke-width="0.9" fill="none"/>
<path d="M501.3 821.5 L825 510" stroke="#a8a8b2" stroke-width="1" fill="none"/>
<path d="M501.3 821.5 Q495 835 493.3 857" stroke="#a3a4ac" stroke-width="1" fill="none"/>
<rect x="500.2" y="198.3" width="2.4" height="623" fill="#e8262a"/>
<path d="M804.5 433.3 H946.5 Q949 433.3 951 435.5 L951.5 436 Q953 438 953 440.5 V512.5 Q953 515 951 517 Q949 519 946.5 519 H804.5 Q802 519 800 517 Q798.2 515 798.2 512.5 V440 Q798.2 437.5 800 435.5 Q802 433.3 804.5 433.3 Z" stroke="#c0141c" stroke-width="2" fill="none"/>
<defs><pattern id="hatch" width="2.4" height="2.4" patternUnits="userSpaceOnUse" patternTransform="rotate(45)"><rect width="2.4" height="2.4" fill="#e42d35"/><rect width="1.1" height="2.4" fill="#a8141c"/></pattern><mask id="holes"><rect x="790" y="420" width="180" height="110" fill="#fff"/><circle cx="840.5" cy="476" r="16.8" fill="#000"/><circle cx="910" cy="476" r="16.8" fill="#000"/></mask></defs>
<rect x="806.8" y="442.1" width="138.2" height="68.4" fill="url(#hatch)" stroke="#9c0c14" stroke-width="2" mask="url(#holes)"/>
<circle cx="840.5" cy="476" r="17.2" fill="none" stroke="#c42026" stroke-width="1.4"/>
<circle cx="910" cy="476" r="17.2" fill="none" stroke="#c42026" stroke-width="1.4"/>
<path d="M826 484 L855 460 M832 490 L858 468 M830 492 L857 470" stroke="#9d9ea8" stroke-width="1" fill="none"/>
<path d="M903 462 L903 494 M900 468 L925 493 M900 475 L925 475 M896 480 L918 491" stroke="#a0a0a8" stroke-width="1" fill="none"/>
<path d="M945 500 L952 504" stroke="#a0a0a8" stroke-width="1" fill="none"/>
</svg>
<div class="btn" style="left:831px;top:971px;width:17px;height:16px"></div>
<div class="a" style="left:835.5px;top:978.5px;width:8px;height:1.6px;background:#3b3bf0"></div>
<div class="a" style="left:838.7px;top:975px;width:1.6px;height:8.5px;background:#3b3bf0"></div>
<div class='t' style='left:6.4px;top:6.23px;font-size:14.5px;line-height:14.5px;color:#dfdbd2;font-weight:400;letter-spacing:0.075px;'>File</div>
<div class='t' style='left:42.1px;top:6.23px;font-size:14.5px;line-height:14.5px;color:#dfdbd2;font-weight:400;letter-spacing:0.285px;'>Tools</div>
<div class='t' style='left:90.4px;top:6.23px;font-size:14.5px;line-height:14.5px;color:#dfdbd2;font-weight:400;letter-spacing:-0.029px;'>Advanced</div>
<div class='t' style='left:168.4px;top:6.23px;font-size:14.5px;line-height:14.5px;color:#dfdbd2;font-weight:400;letter-spacing:0.142px;'>Settings</div>
<div class='t' style='left:235.5px;top:6.23px;font-size:14.5px;line-height:14.5px;color:#dfdbd2;font-weight:400;letter-spacing:-0.109px;'>Help</div>
<div class='t' style='left:7.5px;top:31.93px;font-size:14.5px;line-height:14.5px;color:#3c3c3c;font-weight:400;letter-spacing:0.969px;'>Port</div>
<div class='t' style='left:171.4px;top:31.93px;font-size:14.5px;line-height:14.5px;color:#3c3c3c;font-weight:400;letter-spacing:0.000px;'>@</div>
<div class='t' style='left:194.0px;top:31.93px;font-size:14.5px;line-height:14.5px;color:#3c3c3c;font-weight:400;letter-spacing:-0.062px;'>115200</div>
<div class='t' style='left:293.2px;top:31.93px;font-size:14.5px;line-height:14.5px;color:#3c3c3c;font-weight:400;letter-spacing:0.163px;'>Disconnect</div>
<div class='t' style='left:381.3px;top:31.93px;font-size:14.5px;line-height:14.5px;color:#3c3c3c;font-weight:400;letter-spacing:-0.098px;'>Reset</div>
<div class='t' style='left:635.5px;top:32.33px;font-size:14.5px;line-height:14.5px;color:#3c3c3c;font-weight:400;letter-spacing:0.093px;'>Load File</div>
<div class='t' style='left:710.2px;top:32.33px;font-size:14.5px;line-height:14.5px;color:#3c3c3c;font-weight:400;letter-spacing:0.000px;transform:scaleX(0.878);transform-origin:0 0;'>SD</div>
<div class='t' style='left:742.3px;top:32.33px;font-size:14.5px;line-height:14.5px;color:#3c3c3c;font-weight:400;letter-spacing:0.593px;'>Print</div>
<div class='t' style='left:789.5px;top:32.33px;font-size:14.5px;line-height:14.5px;color:#a8a39c;font-weight:400;letter-spacing:0.000px;transform:scaleX(0.948);transform-origin:0 0;'>Pause</div>
<div class='t' style='left:843.4px;top:32.33px;font-size:14.5px;line-height:14.5px;color:#3c3c3c;font-weight:400;letter-spacing:1.461px;'>Off</div>
<div class='t' style='left:7.5px;top:61.33px;font-size:14.5px;line-height:14.5px;color:#101010;font-weight:400;letter-spacing:1.000px;'>Motors off</div>
<div class='t' style='left:87.1px;top:61.33px;font-size:14.5px;line-height:14.5px;color:#3c3c3c;font-weight:400;letter-spacing:0.000px;transform:scaleX(0.886);transform-origin:0 0;'>XY:</div>
<div class='t' style='left:126.8px;top:61.33px;font-size:14.5px;line-height:14.5px;color:#3c3c3c;font-weight:400;letter-spacing:-0.322px;'>3000</div>
<div class='t' style='left:206.5px;top:61.33px;font-size:14.5px;line-height:14.5px;color:#3c3c3c;font-weight:400;letter-spacing:0.887px;'>mm/min</div>
<div class='t' style='left:266.0px;top:61.33px;font-size:14.5px;line-height:14.5px;color:#3c3c3c;font-weight:400;letter-spacing:0.000px;transform:scaleX(0.884);transform-origin:0 0;'>Z:</div>
<div class='t' style='left:304.5px;top:61.33px;font-size:14.5px;line-height:14.5px;color:#101010;font-weight:400;letter-spacing:-0.302px;'>100</div>
<div class='t' style='left:24.7px;top:340.03px;font-size:14.5px;line-height:14.5px;color:#3c3c3c;font-weight:400;letter-spacing:0.032px;'>Heat:</div>
<div class='t' style='left:69.7px;top:340.03px;font-size:14.5px;line-height:14.5px;color:#3c3c3c;font-weight:400;letter-spacing:1.261px;'>Off</div>
<div class='t' style='left:214.5px;top:340.03px;font-size:14.5px;line-height:14.5px;color:#3c3c3c;font-weight:400;letter-spacing:0.000px;transform:scaleX(0.956);transform-origin:0 0;'>Set</div>
<div class='t' style='left:30.8px;top:368.83px;font-size:14.5px;line-height:14.5px;color:#3c3c3c;font-weight:400;letter-spacing:0.000px;transform:scaleX(0.962);transform-origin:0 0;'>Bed:</div>
<div class='t' style='left:69.7px;top:368.83px;font-size:14.5px;line-height:14.5px;color:#3c3c3c;font-weight:400;letter-spacing:1.261px;'>Off</div>
<div class='t' style='left:214.5px;top:368.83px;font-size:14.5px;line-height:14.5px;color:#3c3c3c;font-weight:400;letter-spacing:0.000px;transform:scaleX(0.956);transform-origin:0 0;'>Set</div>
<div class='t' style='left:41.7px;top:398.03px;font-size:14.5px;line-height:14.5px;color:#101010;font-weight:400;letter-spacing:0.269px;'>Extrude</div>
<div class='t' style='left:177.5px;top:398.03px;font-size:14.5px;line-height:14.5px;color:#101010;font-weight:400;letter-spacing:-0.300px;'>Reverse</div>
<div class='t' style='left:5.8px;top:420.83px;font-size:14.5px;line-height:14.5px;color:#3c3c3c;font-weight:400;letter-spacing:0.002px;'>Length:</div>
<div class='t' style='left:144.2px;top:420.83px;font-size:14.5px;line-height:14.5px;color:#3c3c3c;font-weight:400;letter-spacing:-0.194px;'>Speed:</div>
<div class='t' style='left:95.3px;top:446.33px;font-size:14.5px;line-height:14.5px;color:#3c3c3c;font-weight:400;letter-spacing:-0.335px;'>mm @</div>
<div class='t' style='left:239.5px;top:437.53px;font-size:14.5px;line-height:14.5px;color:#3c3c3c;font-weight:400;letter-spacing:1.156px;'>mm/</div>
<div class='t' style='left:239.5px;top:454.13px;font-size:14.5px;line-height:14.5px;color:#3c3c3c;font-weight:400;letter-spacing:0.662px;'>min</div>
<div class='t' style='left:0.8px;top:479.13px;font-size:14.5px;line-height:14.5px;color:#3c3c3c;font-weight:400;letter-spacing:0.164px;'>Print speed:</div>
<div class='t' style='left:220.8px;top:479.13px;font-size:14.5px;line-height:14.5px;color:#3c3c3c;font-weight:400;letter-spacing:0.000px;'>%</div>
<div class='t' style='left:242.5px;top:479.13px;font-size:14.5px;line-height:14.5px;color:#3c3c3c;font-weight:400;letter-spacing:0.000px;transform:scaleX(0.956);transform-origin:0 0;'>Set</div>
<div class='t' style='left:0.8px;top:510.03px;font-size:14.5px;line-height:14.5px;color:#3c3c3c;font-weight:400;letter-spacing:0.473px;'>Print flow:</div>
<div class='t' style='left:220.8px;top:510.03px;font-size:14.5px;line-height:14.5px;color:#3c3c3c;font-weight:400;letter-spacing:0.000px;'>%</div>
<div class='t' style='left:242.5px;top:510.03px;font-size:14.5px;line-height:14.5px;color:#3c3c3c;font-weight:400;letter-spacing:0.000px;transform:scaleX(0.956);transform-origin:0 0;'>Set</div>
<div class='t' style='left:0.8px;top:533.33px;font-size:14.5px;line-height:14.5px;color:#3c3c3c;font-weight:400;letter-spacing:-0.194px;'>T:21.87 /0.00 B:21.33 /0.00 @:0 B@:0</div>
<div class='t' style='left:1640.2px;top:967.73px;font-size:14.5px;line-height:14.5px;color:#3c3c3c;font-weight:400;letter-spacing:0.000px;transform:scaleX(0.939);transform-origin:0 0;'>Send</div>
<div class='t' style='left:1253.6px;top:56.33px;font-size:14.5px;line-height:14.5px;color:#3c3c3c;font-weight:400;letter-spacing:0.021px;'>Connecting...</div>
<div class='t' style='left:1253.6px;top:73.33px;font-size:14.5px;line-height:14.5px;color:#3c3c3c;font-weight:400;letter-spacing:1.024px;'>start</div>
<div class='t' style='left:1253.6px;top:90.33px;font-size:14.5px;line-height:14.5px;color:#3c3c3c;font-weight:400;letter-spacing:0.191px;'>Printer is now online.</div>
<div class='t' style='left:1253.6px;top:107.33px;font-size:14.5px;line-height:14.5px;color:#3c3c3c;font-weight:400;letter-spacing:0.021px;'>echo: External Reset</div>
<div class='t' style='left:1253.6px;top:124.33px;font-size:14.5px;line-height:14.5px;color:#3c3c3c;font-weight:400;letter-spacing:0.111px;'>Marlin 1.1.6.2</div>
<div class='t' style='left:1253.6px;top:141.33px;font-size:14.5px;line-height:14.5px;color:#3c3c3c;font-weight:400;letter-spacing:0.035px;'>echo: Last Updated: 2019-07-26 | Author: Ender-3</div>
<div class='t' style='left:1253.6px;top:158.33px;font-size:14.5px;line-height:14.5px;color:#3c3c3c;font-weight:400;letter-spacing:-0.007px;'>echo:Compiled: Aug  4 2019</div>
<div class='t' style='left:1253.6px;top:175.33px;font-size:14.5px;line-height:14.5px;color:#3c3c3c;font-weight:400;letter-spacing:0.038px;'>echo: Free Memory: 10078  PlannerBufferBytes: 1232</div>
<div class='t' style='left:1253.6px;top:192.33px;font-size:14.5px;line-height:14.5px;color:#3c3c3c;font-weight:400;letter-spacing:-0.148px;'>echo:TF card ok</div>
<div class='t' style='left:1253.6px;top:209.33px;font-size:14.5px;line-height:14.5px;color:#3c3c3c;font-weight:400;letter-spacing:0.571px;'>Init power off infomation.</div>
<div class='t' style='left:1253.6px;top:226.33px;font-size:14.5px;line-height:14.5px;color:#3c3c3c;font-weight:400;letter-spacing:-0.207px;'>size:</div>
<div class='t' style='left:1253.6px;top:243.33px;font-size:14.5px;line-height:14.5px;color:#3c3c3c;font-weight:400;letter-spacing:0.000px;transform:scaleX(0.963);transform-origin:0 0;'>585</div>
<div class='t' style='left:1253.6px;top:260.33px;font-size:14.5px;line-height:14.5px;color:#3c3c3c;font-weight:400;letter-spacing:0.378px;'>init valid:</div>
<div class='t' style='left:1253.6px;top:277.33px;font-size:14.5px;line-height:14.5px;color:#3c3c3c;font-weight:400;letter-spacing:0.000px;'>0</div>
<div class='t' style='left:1253.6px;top:294.33px;font-size:14.5px;line-height:14.5px;color:#3c3c3c;font-weight:400;letter-spacing:0.000px;'>0</div>
<div class='t' style='left:1253.6px;top:311.33px;font-size:14.5px;line-height:14.5px;color:#3c3c3c;font-weight:400;letter-spacing:0.584px;'>Loading file: /home/bill/Desktop/workspace/freecad/test-</div>
<div class='t' style='left:1253.6px;top:328.33px;font-size:14.5px;line-height:14.5px;color:#3c3c3c;font-weight:400;letter-spacing:0.300px;'>small-plate-2-hole/test-small-plate-2-</div>
<div class='t' style='left:1253.6px;top:345.33px;font-size:14.5px;line-height:14.5px;color:#3c3c3c;font-weight:400;letter-spacing:-0.169px;'>hole_0.2mm_PLA_ENDER3_18m.gcode</div>
<div class='t' style='left:1253.6px;top:362.33px;font-size:14.5px;line-height:14.5px;color:#3c3c3c;font-weight:400;letter-spacing:0.598px;'>Loaded /home/bill/Desktop/workspace/freecad/test-small-</div>
<div class='t' style='left:1253.6px;top:379.33px;font-size:14.5px;line-height:14.5px;color:#3c3c3c;font-weight:400;letter-spacing:0.324px;'>plate-2-hole/test-small-plate-2-</div>
<div class='t' style='left:1253.6px;top:396.33px;font-size:14.5px;line-height:14.5px;color:#3c3c3c;font-weight:400;letter-spacing:-0.160px;'>hole_0.2mm_PLA_ENDER3_18m.gcode, 9522 lines</div>
<div class='t' style='left:1253.6px;top:413.33px;font-size:14.5px;line-height:14.5px;color:#3c3c3c;font-weight:400;letter-spacing:0.291px;'>963.90mm of filament used in this print</div>
<div class='t' style='left:1253.6px;top:430.33px;font-size:14.5px;line-height:14.5px;color:#3c3c3c;font-weight:400;letter-spacing:0.090px;'>The print goes:</div>
<div class='t' style='left:1253.6px;top:447.33px;font-size:14.5px;line-height:14.5px;color:#3c3c3c;font-weight:400;letter-spacing:0.016px;'>- from 2.00 mm to 132.37 mm in X and is 130.37 mm wide</div>
<div class='t' style='left:1253.6px;top:464.33px;font-size:14.5px;line-height:14.5px;color:#3c3c3c;font-weight:400;letter-spacing:0.005px;'>- from 10.00 mm to 190.00 mm in Y and is 180.00 mm deep</div>
<div class='t' style='left:1253.6px;top:481.33px;font-size:14.5px;line-height:14.5px;color:#3c3c3c;font-weight:400;letter-spacing:-0.001px;'>- from 0.00 mm to 5.00 mm in Z and is 5.00 mm high</div>
<div class='t' style='left:1253.6px;top:498.33px;font-size:14.5px;line-height:14.5px;color:#3c3c3c;font-weight:400;letter-spacing:0.156px;'>Estimated duration: 26 layers, 0:15:43</div>
</body></html>
